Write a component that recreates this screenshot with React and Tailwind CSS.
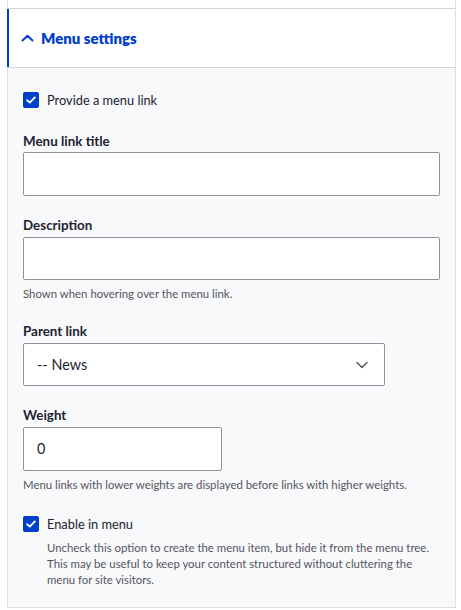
import React from "react";

function Check() {
  return (
    <span className="flex h-4 w-4 shrink-0 items-center justify-center rounded-[2px] bg-[#003ecc]">
      <svg width="10" height="8" viewBox="0 0 10 8" fill="none">
        <path d="M1.2 4.2 L3.8 6.6 L8.8 1.4" stroke="white" strokeWidth="1.9" strokeLinecap="round" strokeLinejoin="round" />
      </svg>
    </span>
  );
}

function Label({ children, className = "" }) {
  return <div className={"text-[13.4px] font-bold leading-[18px] text-[#222330] " + className}>{children}</div>;
}

function Help({ children, className = "" }) {
  return <div className={"text-[11.4px] leading-[16px] text-[#545560] " + className}>{children}</div>;
}

export default function App() {
  return (
    <div className="min-h-[610px] bg-white pl-[7px] pr-[5px] font-['Lato',sans-serif] text-[#222330]">
      <div className="border-x border-[#dedfe4]">
        <div className="h-2 bg-white" />
        <div className="border-y border-[#d3d4d9] bg-white">
          <div className="-ml-px flex h-[58px] items-center gap-[7px] border-l-2 border-[#003ecc] pl-[12px]">
            <svg width="13" height="8" viewBox="0 0 13 8" fill="none">
              <path d="M1.5 6.5 L6.5 1.8 L11.5 6.5" stroke="#003ecc" strokeWidth="2" strokeLinecap="round" strokeLinejoin="round" />
            </svg>
            <span className="text-[15px] font-extrabold text-[#003ecc]">Menu settings</span>
          </div>
        </div>
        <div className="border-b border-[#dedfe4] bg-[#f8f9fb] pb-[19px] pl-[15px] pr-[15px] pt-[24px]">
          <div className="flex items-center gap-2">
            <Check />
            <span className="text-[12.8px] leading-[16px]">Provide a menu link</span>
          </div>

          <Label className="mt-[24px]">Menu link title</Label>
          <div className="mt-[2px] h-[44px] rounded-[2px] border border-[#8e929c] bg-white" />

          <Label className="mt-[20px]">Description</Label>
          <div className="mt-[3px] h-[43px] rounded-[2px] border border-[#8e929c] bg-white" />
          <Help className="mt-[6px]">Shown when hovering over the menu link.</Help>

          <Label className="mt-[20px]">Parent link</Label>
          <div className="mt-[3px] flex h-[43px] w-[362px] items-center justify-between rounded-[2px] border border-[#8e929c] bg-white pl-[13px] pr-[16px]">
            <span className="text-[14.4px]">-- News</span>
            <svg width="12" height="8" viewBox="0 0 12 8" fill="none">
              <path d="M1 1.5 L6 6.5 L11 1.5" stroke="#545560" strokeWidth="1.4" strokeLinecap="round" strokeLinejoin="round" />
            </svg>
          </div>

          <Label className="mt-[20px]">Weight</Label>
          <div className="mt-[3px] flex h-[44px] w-[199px] items-center rounded-[2px] border border-[#8e929c] bg-white pl-[13px]">
            <span className="text-[14.4px]">0</span>
          </div>
          <Help className="mt-[6px]">Menu links with lower weights are displayed before links with higher weights.</Help>

          <div className="mt-[23px] flex items-center gap-2">
            <Check />
            <span className="text-[12.8px] leading-[16px]">Enable in menu</span>
          </div>
          <Help className="mt-[8px] pl-[24px]">
            Uncheck this option to create the menu item, but hide it from the menu tree. This may be useful to keep your content structured without cluttering the menu for site visitors.
          </Help>
        </div>
      </div>
    </div>
  );
}
